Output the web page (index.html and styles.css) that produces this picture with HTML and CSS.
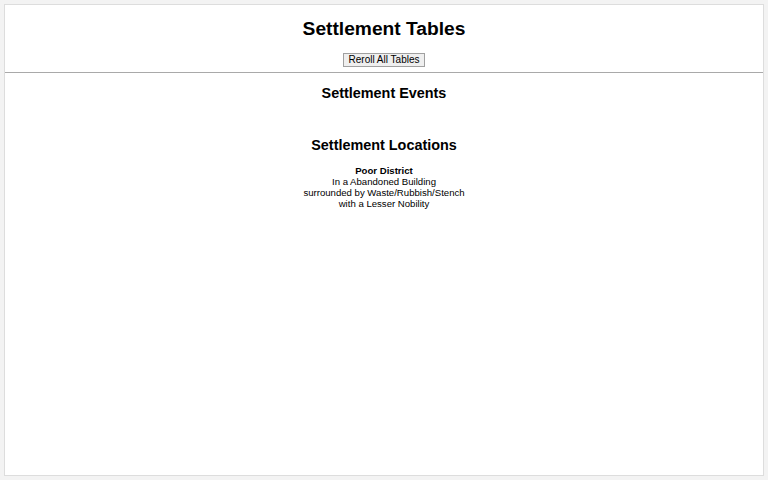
FILE: index.html
```html
<!DOCTYPE html>
<html lang="en">

<head>
    <meta charset="UTF-8">
    <meta name="viewport" content="width=device-width, initial-scale=1.0">
    <title>Settlement Tables</title>
    <link rel="stylesheet" href="styles.css">
</head>

<body>
    <div class="container">
        <div id="header">
            <h1>Settlement Tables</h1>
            <button id="reroll-btn">Reroll All Tables</button>
        </div>
        <div class="table-section">
            <h2>Settlement Events</h2>
            <div class="result"></div>
        </div>
        <div class="table-section">
            <h2>Settlement Locations</h2>
            <div class="result">
                <div class="result-title">Poor District</div>
                <div>In a Abandoned Building</div>
                <div>surrounded by Waste/Rubbish/Stench</div>
                <div>with a Lesser Nobility</div>
            </div>
        </div>
    </div>
</body>

</html>
```

FILE: styles.css
```css
:root {
    --background-color: #f3f3f3;
    --card-background: #ffffff;
    --text-color: #000000;
    --border-color: #dddddd;
    --rule-color: #a9a9a9;
}

* {
    box-sizing: border-box;
    margin: 0;
    padding: 0;
}

html,
body {
    height: 100%;
}

body {
    font-family: "Liberation Sans", Arial, sans-serif;
    background-color: var(--background-color);
    color: var(--text-color);
    padding: 4px;
}

.container {
    height: 100%;
    background: var(--card-background);
    border: 1px solid var(--border-color);
    text-align: center;
}

#header {
    padding: 12px 0 5px;
    border-bottom: 1px solid var(--rule-color);
}

h1 {
    font-size: 19.2px;
    font-weight: bold;
    line-height: 23px;
    margin-bottom: 13px;
}

#reroll-btn {
    display: block;
    margin: 0 auto;
    font-family: inherit;
    font-size: 10px;
    line-height: 12px;
    padding: 0 5px;
    background-color: #efefef;
    border: 1px solid #a0a0a0;
    border-radius: 0;
}

.table-section {
    padding-top: 12px;
}

h2 {
    font-size: 14.4px;
    font-weight: bold;
    line-height: 17px;
}

.result {
    min-height: 23px;
    padding-top: 11px;
    font-size: 9.6px;
    line-height: 11px;
}

.result-title {
    font-weight: bold;
}
```
